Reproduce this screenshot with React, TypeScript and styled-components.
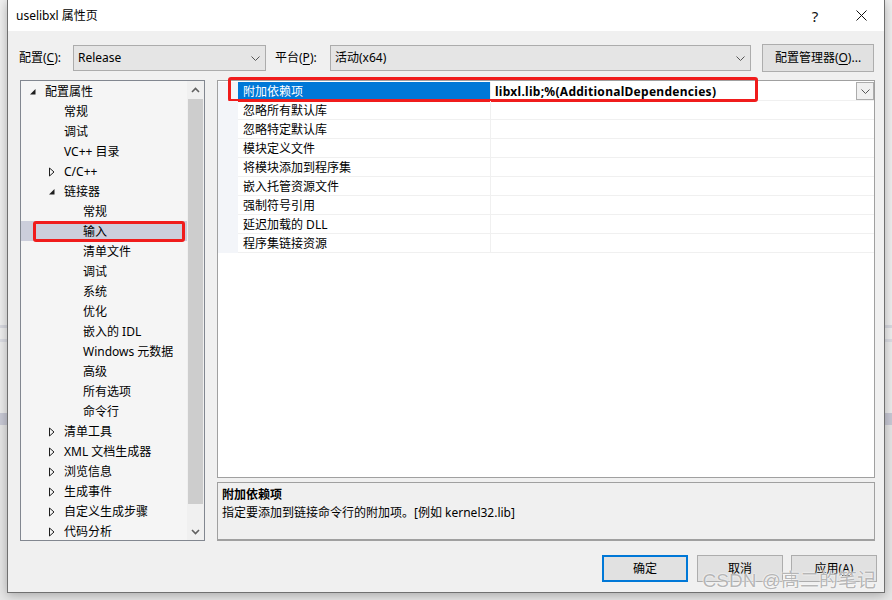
import React from "react";
import styled, { createGlobalStyle, css } from "styled-components";

const Global = createGlobalStyle`
  html, body { margin: 0; padding: 0; }
  body {
    width: 892px;
    height: 600px;
    overflow: hidden;
    background: linear-gradient(to bottom,
      #efefef 0, #efefef 325px, #d8d9e0 325px, #d8d9e0 328px,
      #efefef 328px, #efefef 339px, #dcdde3 339px, #dcdde3 342px,
      #ececec 342px, #ececec 413px, #c8c9d5 413px, #c8c9d5 425px,
      #e6e6e6 425px, #e6e6e6 600px);
    font-family: "Noto Sans", "Noto Sans CJK SC", sans-serif;
    font-size: 12px;
    color: #000;
  }
`;

const Window = styled.div`
  position: relative;
  margin-left: 7px;
  width: 876px;
  height: 592px;
  border: 1px solid #707070;
  border-top: none;
  background: #f0f0f0;
  box-shadow: 0 2px 10px rgba(0, 0, 0, 0.28);
  display: flex;
  flex-direction: column;
`;

const TitleBar = styled.div`
  height: 31px;
  background: #fff;
  display: flex;
  align-items: center;
  padding-left: 8px;
`;

const Title = styled.div`
  flex: 1;
  line-height: 16px;
`;

const CaptionButton = styled.div`
  width: 46px;
  height: 31px;
  display: flex;
  align-items: center;
  justify-content: center;
  font-size: 15px;
  color: #111;
`;

const ConfigRow = styled.div`
  display: flex;
  align-items: center;
  height: 28px;
  margin: 13px 0 0 11px;
`;

const Label = styled.div<{ $w: number; $ml?: number }>`
  width: ${(p) => p.$w}px;
  margin-left: ${(p) => p.$ml ?? 0}px;
  white-space: nowrap;
  line-height: 16px;
  u { text-decoration: underline; text-underline-offset: 2px; }
`;

const Combo = styled.div<{ $w: number }>`
  width: ${(p) => p.$w}px;
  height: 26px;
  box-sizing: border-box;
  border: 1px solid #acacac;
  background: #e5e5e5;
  display: flex;
  align-items: center;
  padding: 0 5px 0 4px;
`;

const ComboText = styled.div`
  flex: 1;
  line-height: 16px;
`;

const PushButton = styled.div<{ $w: number; $h: number; $default?: boolean; $ml?: number }>`
  width: ${(p) => p.$w}px;
  height: ${(p) => p.$h}px;
  margin-left: ${(p) => p.$ml ?? 0}px;
  box-sizing: border-box;
  background: #e1e1e1;
  border: 1px solid #adadad;
  display: flex;
  align-items: center;
  justify-content: center;
  white-space: nowrap;
  line-height: 16px;
  ${(p) =>
    p.$default &&
    css`
      border: 2px solid #0078d7;
    `}
  u { text-decoration: underline; text-underline-offset: 2px; }
`;

const Main = styled.div`
  display: flex;
  margin: 8px 9px 0 12px;
  height: 461px;
  gap: 12px;
`;

const Tree = styled.div`
  width: 185px;
  box-sizing: border-box;
  border: 1px solid #828790;
  background: #f5f5f5;
  display: flex;
`;

const TreeRows = styled.div`
  flex: 1;
  overflow: hidden;
`;

const TreeRow = styled.div<{ $level: number; $selected?: boolean }>`
  position: relative;
  height: 20px;
  box-sizing: border-box;
  padding-top: 2px;
  display: flex;
  align-items: center;
  padding-left: ${(p) => 8 + p.$level * 19}px;
  white-space: nowrap;
  background: ${(p) => (p.$selected ? "#cccedb" : "transparent")};
  line-height: 16px;
`;

const Expander = styled.div`
  width: 16px;
  height: 18px;
  display: flex;
  align-items: center;
  flex-shrink: 0;
`;

const Scrollbar = styled.div`
  width: 17px;
  background: #f0f0f0;
  display: flex;
  flex-direction: column;
  align-items: center;
`;

const ScrollArrow = styled.div`
  width: 17px;
  height: 17px;
  display: flex;
  align-items: center;
  justify-content: center;
`;

const Thumb = styled.div`
  width: 15px;
  height: 405px;
  margin-top: 1px;
  background: #cdcdcd;
`;

const Spacer = styled.div`
  flex: 1;
`;

const RightCol = styled.div`
  width: 658px;
  display: flex;
  flex-direction: column;
  gap: 4px;
`;

const Grid = styled.div`
  height: 398px;
  box-sizing: border-box;
  border: 1px solid #a0a0a0;
  background: #fff;
  padding-top: 1px;
`;

const GridRow = styled.div`
  position: relative;
  display: flex;
  height: 19px;
`;

const Gutter = styled.div`
  width: 20px;
  background: #f3f5f9;
  flex-shrink: 0;
`;

const NameCell = styled.div<{ $selected?: boolean }>`
  width: 253px;
  box-sizing: border-box;
  padding: 2px 0 0 5px;
  display: flex;
  align-items: center;
  border-bottom: 1px solid #f0f0f0;
  border-right: 1px solid #f0f0f0;
  white-space: nowrap;
  line-height: 16px;
  ${(p) =>
    p.$selected &&
    css`
      background: #0078d7;
      color: #fff;
      border-bottom-color: #fff;
    `}
`;

const ValueCell = styled.div`
  flex: 1;
  display: flex;
  align-items: center;
  padding-left: 4px;
  border-bottom: 1px solid #f0f0f0;
  font-weight: 700;
  white-space: nowrap;
  line-height: 16px;
`;

const ValueText = styled.div`
  flex: 1;
  padding-top: 2px;
  letter-spacing: 0.28px;
`;

const DropButton = styled.div`
  width: 18px;
  height: 18px;
  box-sizing: border-box;
  border: 1px solid #acacac;
  background: #f0f0f0;
  display: flex;
  align-items: center;
  justify-content: center;
`;

const Description = styled.div`
  flex: 1;
  box-sizing: border-box;
  border: 1px solid #a0a0a0;
  border-bottom: 2px solid #a0a0a0;
  padding: 3px 4px;
  line-height: 18px;
`;

const DescTitle = styled.div`
  font-weight: 700;
`;

const ButtonRow = styled.div`
  display: flex;
  justify-content: flex-end;
  margin: 14px 7px 0 0;
`;

const RedBox = styled.div<{ $top: number; $left: number; $w: number; $h: number }>`
  position: absolute;
  top: ${(p) => p.$top}px;
  left: ${(p) => p.$left}px;
  width: ${(p) => p.$w}px;
  height: ${(p) => p.$h}px;
  box-sizing: border-box;
  border: 3px solid #f01c1c;
  border-radius: 3px;
  pointer-events: none;
`;

const Watermark = styled.div`
  position: absolute;
  right: 8px;
  bottom: -1px;
  font-family: "Liberation Sans", "Noto Sans CJK SC", sans-serif;
  font-size: 19px;
  color: rgba(150, 150, 150, 0.7);
  text-shadow: 0 0 1px #fff, 0 0 2px #fff;
  white-space: nowrap;
  line-height: 24px;
`;

const Chevron = ({ dir = "down", color = "#555" }: { dir?: "down" | "up"; color?: string }) => (
  <svg width="9" height="5" viewBox="0 0 9 5">
    <polyline
      points={dir === "down" ? "0.5,0.5 4.5,4.5 8.5,0.5" : "0.5,4.5 4.5,0.5 8.5,4.5"}
      fill="none"
      stroke={color}
      strokeWidth="1"
    />
  </svg>
);

const ScrollChevron = ({ dir }: { dir: "up" | "down" }) => (
  <svg width="9" height="6" viewBox="0 0 9 6">
    <polyline
      points={dir === "down" ? "1,1 4.5,4.5 8,1" : "1,5 4.5,1.5 8,5"}
      fill="none"
      stroke="#606060"
      strokeWidth="1.6"
    />
  </svg>
);

const Expanded = () => (
  <svg width="8" height="8" viewBox="0 0 8 8">
    <polygon points="6.5,1 6.5,6.5 1,6.5" fill="#1e1e1e" />
  </svg>
);

const Collapsed = () => (
  <svg width="8" height="10" viewBox="0 0 8 10">
    <polygon points="1.5,1 6,5 1.5,9" fill="none" stroke="#1e1e1e" strokeWidth="1" />
  </svg>
);

type TreeItem = { label: string; level: number; exp?: "open" | "closed"; selected?: boolean };

const treeItems: TreeItem[] = [
  { label: "配置属性", level: 0, exp: "open" },
  { label: "常规", level: 1 },
  { label: "调试", level: 1 },
  { label: "VC++ 目录", level: 1 },
  { label: "C/C++", level: 1, exp: "closed" },
  { label: "链接器", level: 1, exp: "open" },
  { label: "常规", level: 2 },
  { label: "输入", level: 2, selected: true },
  { label: "清单文件", level: 2 },
  { label: "调试", level: 2 },
  { label: "系统", level: 2 },
  { label: "优化", level: 2 },
  { label: "嵌入的 IDL", level: 2 },
  { label: "Windows 元数据", level: 2 },
  { label: "高级", level: 2 },
  { label: "所有选项", level: 2 },
  { label: "命令行", level: 2 },
  { label: "清单工具", level: 1, exp: "closed" },
  { label: "XML 文档生成器", level: 1, exp: "closed" },
  { label: "浏览信息", level: 1, exp: "closed" },
  { label: "生成事件", level: 1, exp: "closed" },
  { label: "自定义生成步骤", level: 1, exp: "closed" },
  { label: "代码分析", level: 1, exp: "closed" },
];

const props = [
  "附加依赖项",
  "忽略所有默认库",
  "忽略特定默认库",
  "模块定义文件",
  "将模块添加到程序集",
  "嵌入托管资源文件",
  "强制符号引用",
  "延迟加载的 DLL",
  "程序集链接资源",
];

export default function App() {
  return (
    <>
      <Global />
      <Window>
        <TitleBar>
          <Title>uselibxl 属性页</Title>
          <CaptionButton>?</CaptionButton>
          <CaptionButton>
            <svg width="11" height="11" viewBox="0 0 11 11">
              <path d="M0.5 0.5 L10.5 10.5 M10.5 0.5 L0.5 10.5" stroke="#111" strokeWidth="1" />
            </svg>
          </CaptionButton>
        </TitleBar>

        <ConfigRow>
          <Label $w={54}>
            配置(<u>C</u>):
          </Label>
          <Combo $w={193}>
            <ComboText>Release</ComboText>
            <Chevron />
          </Combo>
          <Label $w={55} $ml={9}>
            平台(<u>P</u>):
          </Label>
          <Combo $w={421}>
            <ComboText>活动(x64)</ComboText>
            <Chevron />
          </Combo>
          <PushButton $w={112} $h={28} $ml={11}>
            配置管理器(<u>O</u>)...
          </PushButton>
        </ConfigRow>

        <Main>
          <Tree>
            <TreeRows>
              {treeItems.map((t, i) => (
                <TreeRow key={i} $level={t.level} $selected={t.selected}>
                  <Expander>
                    {t.exp === "open" && <Expanded />}
                    {t.exp === "closed" && <Collapsed />}
                  </Expander>
                  {t.label}
                  {t.selected && <RedBox $top={0} $left={12} $w={152} $h={21} />}
                </TreeRow>
              ))}
            </TreeRows>
            <Scrollbar>
              <ScrollArrow>
                <ScrollChevron dir="up" />
              </ScrollArrow>
              <Thumb />
              <Spacer />
              <ScrollArrow>
                <ScrollChevron dir="down" />
              </ScrollArrow>
            </Scrollbar>
          </Tree>

          <RightCol>
            <Grid>
              {props.map((p, i) => (
                <GridRow key={i}>
                  <Gutter />
                  <NameCell $selected={i === 0}>{p}</NameCell>
                  <ValueCell>
                    {i === 0 && (
                      <>
                        <ValueText>libxl.lib;%(AdditionalDependencies)</ValueText>
                        <DropButton>
                          <Chevron />
                        </DropButton>
                      </>
                    )}
                  </ValueCell>
                  {i === 0 && <RedBox $top={-5} $left={10} $w={530} $h={25} />}
                </GridRow>
              ))}
            </Grid>
            <Description>
              <DescTitle>附加依赖项</DescTitle>
              <div>指定要添加到链接命令行的附加项。[例如 kernel32.lib]</div>
            </Description>
          </RightCol>
        </Main>

        <ButtonRow>
          <PushButton $w={86} $h={27} $default>
            确定
          </PushButton>
          <PushButton $w={86} $h={27} $ml={9}>
            取消
          </PushButton>
          <PushButton $w={86} $h={27} $ml={8}>
            应用(<u>A</u>)
          </PushButton>
        </ButtonRow>

        <Watermark>CSDN @高二的笔记</Watermark>
      </Window>
    </>
  );
}
